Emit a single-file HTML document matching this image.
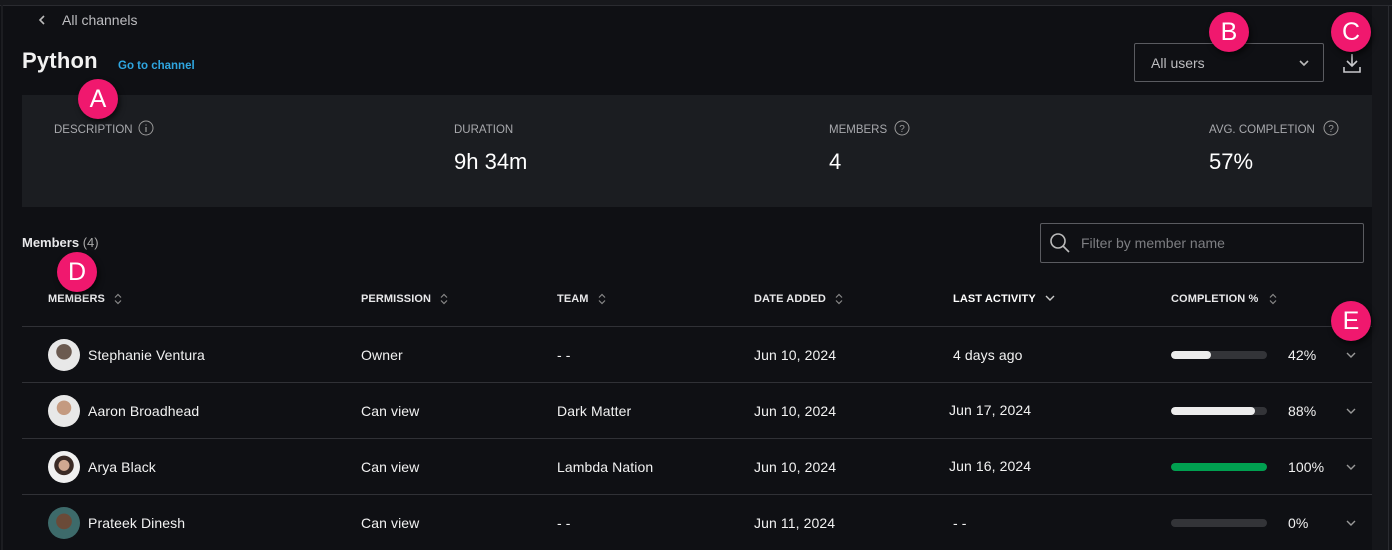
<!DOCTYPE html>
<html><head><meta charset="utf-8"><style>
*{margin:0;padding:0;box-sizing:border-box}
body{width:1392px;height:550px;background:#0f1014;font-family:"Liberation Sans",sans-serif;color:#fff;position:relative;overflow:hidden}
.a{position:absolute;white-space:nowrap}
.lbl{font-size:11.5px;color:#a8a9ad;letter-spacing:0}
.big{font-size:22px;color:#fff}
.th{font-size:11px;font-weight:bold;color:#e8e8ea;letter-spacing:.1px}
.td{font-size:14px;color:#f2f2f2;letter-spacing:.1px}
.line{position:absolute;left:22px;width:1350px;height:1px;background:#303136}
.badge{position:absolute;width:40px;height:40px;border-radius:50%;background:#f0186e;color:#fff;font-size:25px;text-align:center;line-height:40px;box-shadow:2px 3px 6px rgba(0,0,0,.6)}
.bar{position:absolute;left:1171px;width:96px;height:8px;border-radius:4px;background:#333438;overflow:hidden}
.bar i{display:block;height:8px;border-radius:4px;background:#ececec}
.av{position:absolute;left:48px;width:32px;height:32px;border-radius:50%}
</style></head><body>
<div class="a" style="left:0;top:0;width:1392px;height:5px;background:#17181c"></div>
<div class="a" style="left:0;top:5px;width:1392px;height:1px;background:#2a2b30"></div>
<div class="a" style="left:1px;top:5px;width:2px;height:545px;background:#1c1d21"></div>
<div class="a" style="left:1372px;top:6px;width:20px;height:544px;background:#15161a"></div>
<div class="a" style="left:1388px;top:6px;width:1px;height:544px;background:#2a2b30"></div>

<svg class="a" style="left:37px;top:14px" width="10" height="12" viewBox="0 0 10 12"><path d="M7 2 L3 6 L7 10" stroke="#bbb" stroke-width="1.6" fill="none"/></svg>
<div class="a" style="left:62px;top:12px;font-size:14px;color:#bdbdc0">All channels</div>
<div class="a" style="left:22px;top:48px;font-size:22px;font-weight:bold;color:#f2f2f2;letter-spacing:.2px">Python</div>
<div class="a" style="left:118px;top:60px;font-size:11.5px;font-weight:bold;color:#2fa6e0">Go to channel</div>

<div class="a" style="left:1134px;top:43px;width:190px;height:39px;border:1px solid #5a5b60;border-radius:2px"></div>
<div class="a" style="left:1151px;top:55px;font-size:14px;color:#bdbdc0">All users</div>
<svg class="a" style="left:1299px;top:59px" width="10" height="8" viewBox="0 0 10 8"><path d="M1 2 L5 6 L9 2" stroke="#bbb" stroke-width="1.6" fill="none"/></svg>
<svg class="a" style="left:1342px;top:52px" width="20" height="22" viewBox="0 0 20 22"><path d="M10 2 V14 M5 9 L10 14 L15 9 M2 15 V20 H18 V15" stroke="#c8c8cc" stroke-width="1.6" fill="none"/></svg>

<div class="a" style="left:22px;top:95px;width:1350px;height:112px;background:#1b1d21"></div>
<div class="a lbl" style="left:54px;top:124px">DESCRIPTION</div>
<svg class="a" style="left:138px;top:120px" width="16" height="16"><circle cx="8" cy="8" r="7" stroke="#999" fill="none"/><path d="M8 7v5M8 4.5v1" stroke="#999" stroke-width="1.2"/></svg>
<div class="a lbl" style="left:454px;top:124px">DURATION</div>
<div class="a big" style="left:454px;top:149px">9h 34m</div>
<div class="a lbl" style="left:829px;top:124px">MEMBERS</div>
<svg class="a" style="left:894px;top:120px" width="16" height="16"><circle cx="8" cy="8" r="7" stroke="#999" fill="none"/><text x="8" y="12" font-size="10" fill="#999" text-anchor="middle" font-family="Liberation Sans">?</text></svg>
<div class="a big" style="left:829px;top:149px">4</div>
<div class="a lbl" style="left:1209px;top:124px">AVG. COMPLETION</div>
<svg class="a" style="left:1323px;top:120px" width="16" height="16"><circle cx="8" cy="8" r="7" stroke="#999" fill="none"/><text x="8" y="12" font-size="10" fill="#999" text-anchor="middle" font-family="Liberation Sans">?</text></svg>
<div class="a big" style="left:1209px;top:149px">57%</div>

<div class="a" style="left:22px;top:235px;font-size:13px;font-weight:bold;color:#e8e8ea">Members <span style="font-weight:normal;color:#aaa">(4)</span></div>
<div class="a" style="left:1040px;top:223px;width:324px;height:40px;border:1px solid #5a5b60;border-radius:2px"></div>
<svg class="a" style="left:1049px;top:232px" width="22" height="22" viewBox="0 0 22 22"><circle cx="9" cy="9" r="7" stroke="#bbb" stroke-width="1.6" fill="none"/><path d="M14 14 L20 20" stroke="#bbb" stroke-width="1.6"/></svg>
<div class="a" style="left:1081px;top:235px;font-size:14px;color:#7d7e82">Filter by member name</div>

<div class="a th" style="left:48px;top:293px">MEMBERS</div>
<div class="a th" style="left:361px;top:293px">PERMISSION</div>
<div class="a th" style="left:557px;top:293px">TEAM</div>
<div class="a th" style="left:754px;top:293px">DATE ADDED</div>
<div class="a th" style="left:953px;top:293px;color:#fff">LAST ACTIVITY</div>
<div class="a th" style="left:1171px;top:293px">COMPLETION %</div>
<svg class="a" style="left:114px;top:293px" width="8" height="12"><path d="M1 4.5L4 1.5L7 4.5M1 7.5L4 10.5L7 7.5" stroke="#888" fill="none" stroke-width="1.2"/></svg>
<svg class="a" style="left:440px;top:293px" width="8" height="12"><path d="M1 4.5L4 1.5L7 4.5M1 7.5L4 10.5L7 7.5" stroke="#888" fill="none" stroke-width="1.2"/></svg>
<svg class="a" style="left:598px;top:293px" width="8" height="12"><path d="M1 4.5L4 1.5L7 4.5M1 7.5L4 10.5L7 7.5" stroke="#888" fill="none" stroke-width="1.2"/></svg>
<svg class="a" style="left:835px;top:293px" width="8" height="12"><path d="M1 4.5L4 1.5L7 4.5M1 7.5L4 10.5L7 7.5" stroke="#888" fill="none" stroke-width="1.2"/></svg>
<svg class="a" style="left:1045px;top:294px" width="10" height="8"><path d="M1 2L5 6L9 2" stroke="#ccc" fill="none" stroke-width="1.4"/></svg>
<svg class="a" style="left:1269px;top:293px" width="8" height="12"><path d="M1 4.5L4 1.5L7 4.5M1 7.5L4 10.5L7 7.5" stroke="#888" fill="none" stroke-width="1.2"/></svg>

<div class="line" style="top:326px"></div>
<div class="line" style="top:382px"></div>
<div class="line" style="top:438px"></div>
<div class="line" style="top:494px"></div>

<div class="av" style="top:339px;background:radial-gradient(circle at 50% 40%,#6b5a50 0 30%,#e8e8e8 32%)"></div>
<div class="a td" style="left:88px;top:347px">Stephanie Ventura</div>
<div class="a td" style="left:361px;top:347px">Owner</div>
<div class="a td" style="left:557px;top:347px">- -</div>
<div class="a td" style="left:754px;top:347px">Jun 10, 2024</div>
<div class="a td" style="left:953px;top:347px">4 days ago</div>
<div class="bar" style="top:351px"><i style="width:40px"></i></div>
<div class="a td" style="left:1288px;top:347px">42%</div>

<div class="av" style="top:395px;background:radial-gradient(circle at 50% 40%,#c49a80 0 28%,#e8e8e8 30%)"></div>
<div class="a td" style="left:88px;top:403px">Aaron Broadhead</div>
<div class="a td" style="left:361px;top:403px">Can view</div>
<div class="a td" style="left:557px;top:403px">Dark Matter</div>
<div class="a td" style="left:754px;top:403px">Jun 10, 2024</div>
<div class="a td" style="left:949px;top:402px">Jun 17, 2024</div>
<div class="bar" style="top:407px"><i style="width:84px"></i></div>
<div class="a td" style="left:1288px;top:403px">88%</div>

<div class="av" style="top:451px;background:radial-gradient(circle at 50% 45%,#d0a890 0 22%,#3a2a25 24% 40%,#f0f0f0 42%)"></div>
<div class="a td" style="left:88px;top:459px">Arya Black</div>
<div class="a td" style="left:361px;top:459px">Can view</div>
<div class="a td" style="left:557px;top:459px">Lambda Nation</div>
<div class="a td" style="left:754px;top:459px">Jun 10, 2024</div>
<div class="a td" style="left:949px;top:458px">Jun 16, 2024</div>
<div class="bar" style="top:463px"><i style="width:96px;background:#00a050"></i></div>
<div class="a td" style="left:1288px;top:459px">100%</div>

<div class="av" style="top:507px;background:radial-gradient(circle at 50% 45%,#6a4a38 0 32%,#3d6a6a 34%)"></div>
<div class="a td" style="left:88px;top:515px">Prateek Dinesh</div>
<div class="a td" style="left:361px;top:515px">Can view</div>
<div class="a td" style="left:557px;top:515px">- -</div>
<div class="a td" style="left:754px;top:515px">Jun 11, 2024</div>
<div class="a td" style="left:953px;top:515px">- -</div>
<div class="bar" style="top:519px"></div>
<div class="a td" style="left:1288px;top:515px">0%</div>

<svg class="a" style="left:1346px;top:351px" width="10" height="8"><path d="M1 2L5 6L9 2" stroke="#999" fill="none" stroke-width="1.4"/></svg>
<svg class="a" style="left:1346px;top:407px" width="10" height="8"><path d="M1 2L5 6L9 2" stroke="#999" fill="none" stroke-width="1.4"/></svg>
<svg class="a" style="left:1346px;top:463px" width="10" height="8"><path d="M1 2L5 6L9 2" stroke="#999" fill="none" stroke-width="1.4"/></svg>
<svg class="a" style="left:1346px;top:519px" width="10" height="8"><path d="M1 2L5 6L9 2" stroke="#999" fill="none" stroke-width="1.4"/></svg>

<div class="badge" style="left:78px;top:79px">A</div>
<div class="badge" style="left:1209px;top:12px">B</div>
<div class="badge" style="left:1331px;top:12px">C</div>
<div class="badge" style="left:57px;top:252px">D</div>
<div class="badge" style="left:1331px;top:301px">E</div>
</body></html>
